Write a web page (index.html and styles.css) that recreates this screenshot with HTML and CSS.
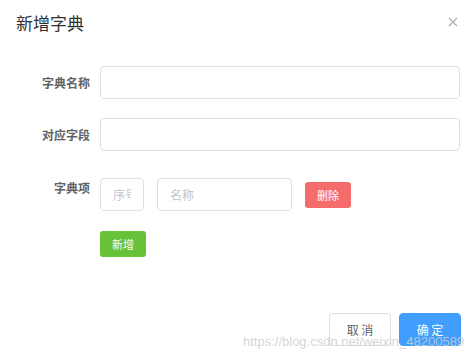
FILE: index.html
```html
<!DOCTYPE html>
<html lang="zh-CN">
<head>
    <meta charset="UTF-8">
    <title>新增字典</title>
    <link rel="stylesheet" href="styles.css">
</head>
<body>
    <div class="dialog">
        <!-- Header -->
        <div class="dialog-header">
            <span class="dialog-title">新增字典</span>
            <svg class="dialog-close" width="10" height="10" viewBox="0 0 10 10">
                <path d="M1 1 L9 9 M9 1 L1 9" stroke="#a8abb2" stroke-width="1.1" fill="none"/>
            </svg>
        </div>

        <!-- Form -->
        <div class="dialog-body">
            <div class="form-item first">
                <label class="form-label">字典名称</label>
                <input class="form-input wide" type="text">
            </div>
            <div class="form-item second">
                <label class="form-label">对应字段</label>
                <input class="form-input wide" type="text">
            </div>
            <div class="form-item third">
                <label class="form-label top">字典项</label>
                <div class="item-row">
                    <input class="form-input order" type="text" placeholder="序号">
                    <input class="form-input name" type="text" placeholder="名称">
                    <button class="btn btn-danger">删除</button>
                </div>
            </div>
            <div class="form-item add">
                <span class="form-label"></span>
                <button class="btn btn-success">新增</button>
            </div>
        </div>

        <!-- Footer -->
        <div class="dialog-footer">
            <button class="btn-lg btn-default">取 消</button>
            <button class="btn-lg btn-primary">确 定</button>
        </div>

        <div class="watermark">https://blog.csdn.net/weixin_48200589</div>
    </div>
</body>
</html>
```

FILE: styles.css
```css
body {
    margin: 0;
    background: #fff;
    font-family: "Noto Sans CJK SC", "Liberation Sans", sans-serif;
}
.dialog {
    position: relative;
    width: 474px;
    height: 360px;
    overflow: hidden;
}
.dialog-header {
    display: flex;
    justify-content: space-between;
    align-items: center;
    padding: 9px 16px 0 16px;
    height: 26px;
}
.dialog-title {
    font-size: 17px;
    color: #303133;
}
.dialog-body {
    padding-right: 14px;
}
.form-item {
    display: flex;
    align-items: center;
}
.form-item.first {
    margin-top: 31px;
}
.form-item.second {
    margin-top: 19px;
}
.form-item.third {
    margin-top: 27px;
    align-items: flex-start;
}
.form-item.add {
    margin-top: 20px;
}
.form-label {
    width: 100px;
    padding-right: 10px;
    box-sizing: border-box;
    text-align: right;
    font-size: 12px;
    font-weight: bold;
    color: #606266;
}
.form-label.top {
    line-height: 18px;
    padding-top: 1px;
}
.form-input {
    height: 33px;
    box-sizing: border-box;
    border: 1px solid #dcdfe6;
    border-radius: 4px;
    padding: 0 12px;
    font-size: 12px;
    font-family: inherit;
    color: #606266;
    outline: none;
    background: #fff;
}
.form-input::placeholder {
    color: #c0c4cc;
}
.form-input.wide {
    width: 360px;
}
.form-input.order {
    width: 44px;
}
.form-input.name {
    width: 135px;
    margin-left: 13px;
}
.item-row {
    display: flex;
    align-items: center;
}
.btn {
    height: 26px;
    width: 46px;
    border: none;
    border-radius: 3px;
    color: #fff;
    font-size: 11px;
    font-family: inherit;
    padding: 0;
}
.btn-danger {
    background: #f56c6c;
    margin-left: 13px;
}
.btn-success {
    background: #67c23a;
}
.dialog-footer {
    position: absolute;
    right: 13px;
    top: 313px;
    display: flex;
    gap: 8px;
}
.btn-lg {
    width: 62px;
    height: 33px;
    border-radius: 4px;
    font-size: 12px;
    font-family: inherit;
    padding: 0;
}
.btn-default {
    background: #fff;
    border: 1px solid #dcdfe6;
    color: #606266;
}
.btn-primary {
    background: #409eff;
    border: 1px solid #409eff;
    color: #fff;
}
.watermark {
    position: absolute;
    left: 243px;
    top: 334px;
    font-family: "Liberation Sans", sans-serif;
    font-size: 13px;
    color: rgba(205, 205, 205, 0.85);
    white-space: nowrap;
}
```
